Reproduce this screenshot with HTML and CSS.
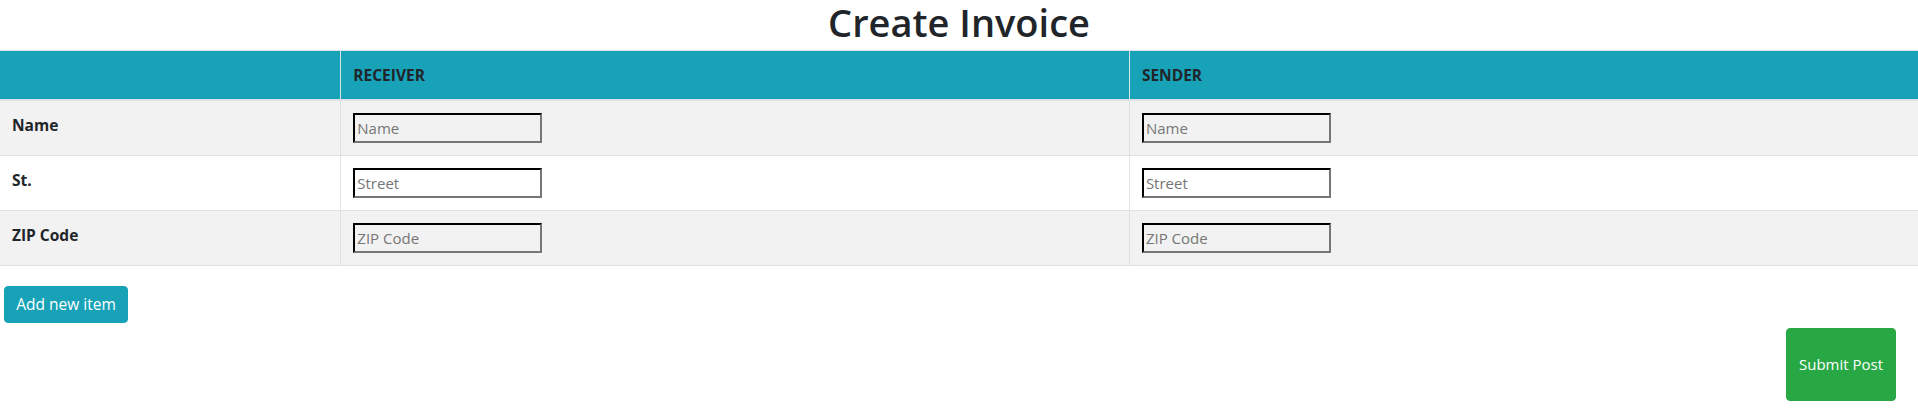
FILE: index.html
```html
<!DOCTYPE html>
<html lang="en">
<head>
<meta charset="utf-8">
<title>Create Invoice</title>
<link rel="stylesheet" href="styles.css">
</head>
<body>
<h1 class="title">Create Invoice</h1>
<table class="invoice">
  <thead>
    <tr>
      <th class="col-label"></th>
      <th>RECEIVER</th>
      <th>SENDER</th>
    </tr>
  </thead>
  <tbody>
    <tr class="odd">
      <th class="row-label">Name</th>
      <td><input class="field" type="text" placeholder="Name"></td>
      <td><input class="field" type="text" placeholder="Name"></td>
    </tr>
    <tr>
      <th class="row-label">St.</th>
      <td><input class="field" type="text" placeholder="Street"></td>
      <td><input class="field" type="text" placeholder="Street"></td>
    </tr>
    <tr class="odd">
      <th class="row-label">ZIP Code</th>
      <td><input class="field" type="text" placeholder="ZIP Code"></td>
      <td><input class="field" type="text" placeholder="ZIP Code"></td>
    </tr>
  </tbody>
</table>
<div class="actions">
  <button class="btn btn-info" type="button">Add new item</button>
</div>
<div class="submit-row">
  <button class="btn btn-success" type="submit">Submit Post</button>
</div>
</body>
</html>
```

FILE: styles.css
```css
* { box-sizing: border-box; }

html, body {
  margin: 0;
  padding: 0;
  background: #ffffff;
  color: #212529;
  font-family: "Open Sans", "Noto Sans", "Liberation Sans", sans-serif;
  font-size: 16px;
}

.title {
  margin: 0;
  height: 50px;
  line-height: 44px;
  font-size: 38px;
  font-weight: 600;
  text-align: center;
  color: #212529;
}

.invoice {
  width: 100%;
  border-collapse: collapse;
}

.invoice th,
.invoice td {
  padding: 12px;
  text-align: left;
  vertical-align: top;
  border-top: 1px solid #dee2e6;
  line-height: 24px;
}

.invoice thead th {
  background: #17a2b8;
  font-size: 15.5px;
  font-weight: 700;
  border-bottom: 2px solid #dee2e6;
}

.invoice thead th + th,
.invoice td {
  border-left: 1px solid #dee2e6;
}

.col-label { width: 341px; }

.invoice tbody tr { background: #ffffff; }
.invoice tbody tr.odd { background: #f2f2f2; }
.invoice tbody tr:last-child th,
.invoice tbody tr:last-child td { border-bottom: 1px solid #dee2e6; }

.row-label {
  font-size: 15.5px;
  font-weight: 700;
}

.invoice td { width: 789px; }

.field {
  display: block;
  width: 189px;
  height: 30px;
  margin: 0;
  padding: 1px 2px;
  border: 2px inset #767676;
  border-top-color: #1b1b1b;
  border-left-color: #1b1b1b;
  background: transparent;
  font-family: "Open Sans", "Noto Sans", sans-serif;
  font-size: 15px;
  color: #212529;
}

.field::placeholder { color: #767676; }

.actions {
  padding: 20px 0 0 4px;
}

.btn {
  display: inline-block;
  border: 1px solid transparent;
  border-radius: 4px;
  color: #ffffff;
  font-family: "Open Sans", "Noto Sans", sans-serif;
  cursor: pointer;
}

.btn-info {
  background: #17a2b8;
  border-color: #17a2b8;
  width: 124px;
  height: 37px;
  padding: 0;
  font-size: 15.5px;
  line-height: 35px;
  text-align: center;
}

.submit-row {
  display: flex;
  justify-content: flex-end;
  padding: 5px 22px 0 0;
}

.btn-success {
  background: #28a745;
  border-color: #28a745;
  width: 110px;
  height: 73px;
  padding: 0;
  font-size: 15px;
  line-height: 71px;
  text-align: center;
}
```
